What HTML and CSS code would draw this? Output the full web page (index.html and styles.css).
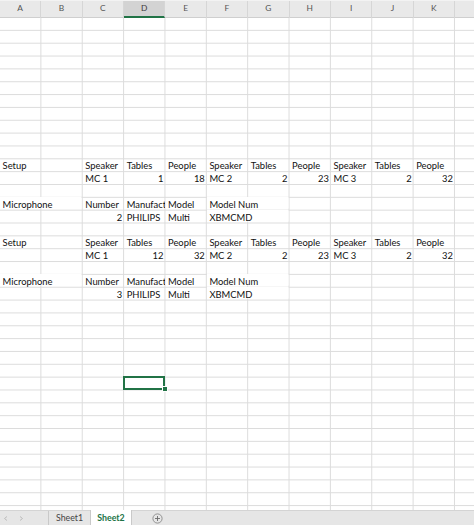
FILE: index.html
```html
<!DOCTYPE html>
<html>
<head>
<meta charset="utf-8">
<link rel="stylesheet" href="styles.css">
</head>
<body>
<div class="app">
  <div class="sheet">
    <div class="colhead">
      <div class="ch">A</div><div class="ch">B</div><div class="ch">C</div><div class="ch active">D</div><div class="ch">E</div><div class="ch">F</div><div class="ch">G</div><div class="ch">H</div><div class="ch">I</div><div class="ch">J</div><div class="ch">K</div><div class="ch last"></div>
    </div>
    <div class="grid">
      <!-- row 12 -->
      <div class="c r12 a">Setup</div>
      <div class="c r12 cc">Speaker</div>
      <div class="c r12 d">Tables</div>
      <div class="c r12 e">People</div>
      <div class="c r12 f">Speaker</div>
      <div class="c r12 g">Tables</div>
      <div class="c r12 h">People</div>
      <div class="c r12 i">Speaker</div>
      <div class="c r12 j">Tables</div>
      <div class="c r12 k">People</div>
      <!-- row 13 -->
      <div class="c r13 cc">MC 1</div>
      <div class="c r13 d num">1</div>
      <div class="c r13 e num">18</div>
      <div class="c r13 f">MC 2</div>
      <div class="c r13 g num">2</div>
      <div class="c r13 h num">23</div>
      <div class="c r13 i">MC 3</div>
      <div class="c r13 j num">2</div>
      <div class="c r13 k num">32</div>
      <!-- row 15 -->
      <div class="c r15 a span2">Microphone</div>
      <div class="c r15 cc">Number</div>
      <div class="c r15 d clip">Manufacturer</div>
      <div class="c r15 e">Model</div>
      <div class="c r15 f span2">Model Num</div>
      <!-- row 16 -->
      <div class="c r16 cc num">2</div>
      <div class="c r16 d">PHILIPS</div>
      <div class="c r16 e">Multi</div>
      <div class="c r16 f span2">XBMCMD</div>
      <!-- row 18 -->
      <div class="c r18 a">Setup</div>
      <div class="c r18 cc">Speaker</div>
      <div class="c r18 d">Tables</div>
      <div class="c r18 e">People</div>
      <div class="c r18 f">Speaker</div>
      <div class="c r18 g">Tables</div>
      <div class="c r18 h">People</div>
      <div class="c r18 i">Speaker</div>
      <div class="c r18 j">Tables</div>
      <div class="c r18 k">People</div>
      <!-- row 19 -->
      <div class="c r19 cc">MC 1</div>
      <div class="c r19 d num">12</div>
      <div class="c r19 e num">32</div>
      <div class="c r19 f">MC 2</div>
      <div class="c r19 g num">2</div>
      <div class="c r19 h num">23</div>
      <div class="c r19 i">MC 3</div>
      <div class="c r19 j num">2</div>
      <div class="c r19 k num">32</div>
      <!-- row 21 -->
      <div class="c r21 a span2">Microphone</div>
      <div class="c r21 cc">Number</div>
      <div class="c r21 d clip">Manufacturer</div>
      <div class="c r21 e">Model</div>
      <div class="c r21 f span2">Model Num</div>
      <!-- row 22 -->
      <div class="c r22 cc num">3</div>
      <div class="c r22 d">PHILIPS</div>
      <div class="c r22 e">Multi</div>
      <div class="c r22 f span2">XBMCMD</div>
      <!-- selection -->
      <div class="sel"><span class="handle"></span></div>
      <div class="filler"></div>
    </div>
  </div>
  <div class="tabs">
    <div class="nav">
      <svg width="40" height="15" viewBox="0 0 40 15"><path d="M7 5.5 L4.5 7.5 L7 9.5" fill="none" stroke="#b8b8b8" stroke-width="0.9"/><path d="M20 5.5 L22.5 7.5 L20 9.5" fill="none" stroke="#b8b8b8" stroke-width="0.9"/></svg>
    </div>
    <div class="tab">Sheet1</div>
    <div class="tab on">Sheet2</div>
    <div class="add">
      <svg width="11" height="11" viewBox="0 0 11 11"><circle cx="5.5" cy="5.5" r="4.6" fill="none" stroke="#8a8a8a" stroke-width="0.9"/><path d="M5.5 3 V8 M3 5.5 H8" stroke="#6a6a6a" stroke-width="0.9"/></svg>
    </div>
    <div class="rest"></div>
  </div>
</div>
</body>
</html>
```

FILE: styles.css
```css
html, body {
  margin: 0;
  padding: 0;
  background: #ffffff;
}
.app {
  width: 474px;
  height: 525px;
  display: flex;
  flex-direction: column;
  overflow: hidden;
  font-family: Lato, "Liberation Sans", sans-serif;
}
.sheet {
  height: 510px;
  display: flex;
  flex-direction: column;
  overflow: hidden;
}
.colhead {
  height: 17.5px;
  flex: none;
  display: grid;
  grid-template-columns: repeat(11, 41.36px) 1fr;
  background: #e9e9e9;
  border-top: 1.5px solid #f3f3f3;
  box-sizing: border-box;
  box-shadow: inset 0 -1px 0 #cfcfcf;
}
.ch {
  font-size: 8.4px;
  color: #555;
  text-align: center;
  line-height: 15px;
  border-right: 1px solid #d6d6d6;
  box-sizing: border-box;
}
.ch.active {
  background: #d3d3d3;
  border-bottom: 2px solid #217346;
  line-height: 14px;
  color: #3a3a3a;
}
.ch.last { border-right: none; }
.grid {
  flex: 1;
  display: grid;
  grid-template-columns: repeat(11, 41.36px) 1fr;
  grid-auto-rows: 12.85px;
  background-image:
    linear-gradient(to right, transparent calc(100% - 1px), #dcdcdc 0),
    linear-gradient(to bottom, transparent calc(100% - 1px), #dcdcdc 0);
  background-size: 41.36px 100%, 100% 12.85px;
  background-repeat: repeat-x, repeat-y;
}
.c {
  font-size: 9.4px;
  color: #111;
  line-height: 12.85px;
  padding: 1.4px 2px 0 2.6px;
  white-space: nowrap;
  box-sizing: border-box;
}
.num { text-align: right; }
.span2 {
  grid-column-end: span 2;
  background-image: linear-gradient(#fff, #fff);
  background-repeat: no-repeat;
  background-position: 0 0;
  background-size: calc(100% - 1.5px) calc(100% - 1.5px);
}
.clip { overflow: hidden; }
.r12 { grid-row: 12; }
.r13 { grid-row: 13; }
.r15 { grid-row: 15; }
.r16 { grid-row: 16; }
.r18 { grid-row: 18; }
.r19 { grid-row: 19; }
.r21 { grid-row: 21; }
.r22 { grid-row: 22; }
.a { grid-column-start: 1; }
.cc { grid-column-start: 3; }
.d { grid-column-start: 4; }
.e { grid-column-start: 5; }
.f { grid-column-start: 6; }
.g { grid-column-start: 7; }
.h { grid-column-start: 8; }
.i { grid-column-start: 9; }
.j { grid-column-start: 10; }
.k { grid-column-start: 11; }
.sel {
  grid-row: 29;
  grid-column: 4;
  position: relative;
}
.sel::before {
  content: "";
  position: absolute;
  left: -1px;
  top: -1px;
  right: 0;
  bottom: 0;
  border: 2px solid #217346;
}
.handle {
  position: absolute;
  right: -2.5px;
  bottom: -2.5px;
  width: 4px;
  height: 4px;
  background: #217346;
  border: 1px solid #fff;
  z-index: 2;
}
.filler { grid-row: 39; grid-column: 1; }
.tabs {
  height: 15px;
  flex: none;
  display: flex;
  background: #e6e6e6;
  border-top: 1px solid #d4d4d4;
  box-sizing: border-box;
  font-size: 8.8px;
}
.nav {
  width: 48px;
  flex: none;
  display: flex;
  align-items: center;
}
.nav svg { display: block; }
.tab {
  width: 42px;
  flex: none;
  text-align: center;
  line-height: 13px;
  color: #444;
  border-left: 1px solid #c9c9c9;
  box-sizing: border-box;
}
.tab.on {
  background: #fff;
  color: #217346;
  font-weight: bold;
  margin-top: -1px;
  line-height: 15px;
  border-right: 1px solid #c9c9c9;
}
.add {
  width: 50px;
  flex: none;
  display: flex;
  align-items: center;
  justify-content: center;
}
.add svg { display: block; }
.rest { flex: 1; }
```
